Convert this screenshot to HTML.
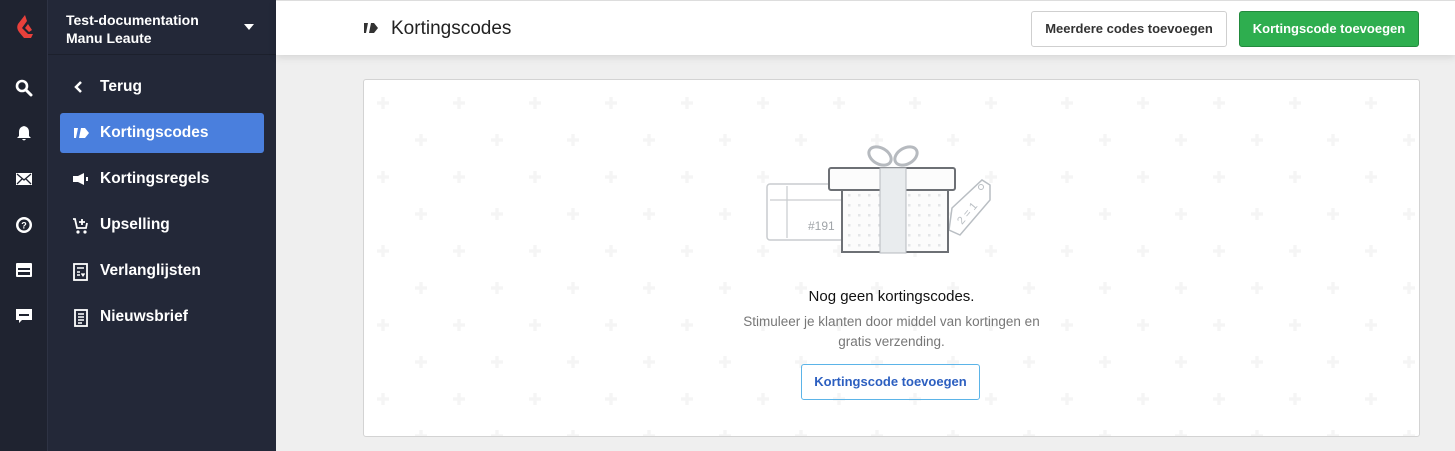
<!DOCTYPE html>
<html><head><meta charset="utf-8"><style>
*{margin:0;padding:0;box-sizing:border-box}
body{width:1455px;height:451px;overflow:hidden;background:#efefef;font-family:"Liberation Sans",sans-serif;position:relative}
.rail{position:absolute;left:0;top:0;width:48px;height:451px;background:#1f2330;border-right:1px solid #2e3344}
.side{position:absolute;left:48px;top:0;width:228px;height:451px;background:#232838}
.sh{height:55px;border-bottom:1px solid #1c202c;padding:11px 0 0 18px;color:#fff;font-weight:bold;font-size:14px;line-height:18px;position:relative}
.sh .c{position:absolute;right:22px;top:24px;border:5px solid transparent;border-top:6px solid #fff;border-bottom:0}
.item{position:absolute;left:12px;width:204px;height:40px;color:#fff;font-weight:bold;font-size:15.5px;line-height:40px;padding-left:40px;border-radius:3px}
.item svg{position:absolute;left:12px;top:12px}
.act{background:#4a7fdd}
.top{position:absolute;left:276px;top:0;right:0;height:55px;background:#fff;box-shadow:0 2px 8px rgba(0,0,0,.12);border-top:1px solid #ddd}
.title{position:absolute;left:115px;top:17px;font-size:19px;color:#222}
.btn{position:absolute;top:10px;height:36px;border-radius:3px;font-weight:bold;font-size:13px;line-height:34px;text-align:center}
.card{position:absolute;left:363px;top:79px;width:1057px;height:358px;background:#fff;border:1px solid #d3d3d3;border-radius:3px;overflow:hidden}
.ic{position:absolute;left:15px}
</style></head><body>
<div class="rail">
 <svg class="ic" style="top:14px" width="20" height="26" viewBox="0 0 20 26"><path d="M10 1 L3 10 Q1 14 4 18 L9 24 L16 24 L18 20 L13 20 L7 14 L12 7 Z" fill="#e8403b"/><path d="M13 10 L10 14 L14 18 L17 16 Z" fill="#e8403b"/></svg>
 <svg class="ic" style="top:79px" width="18" height="18" viewBox="0 0 18 18"><circle cx="7" cy="7" r="5" fill="none" stroke="#fff" stroke-width="2.6"/><path d="M11 11 L16 16" stroke="#fff" stroke-width="3" stroke-linecap="round"/></svg>
 <svg class="ic" style="top:124px" width="18" height="18" viewBox="0 0 18 18"><path d="M9 2 Q4 3 4 8 L4 12 L2 14 L16 14 L14 12 L14 8 Q14 3 9 2Z M7 15 Q9 18 11 15Z" fill="#fff"/></svg>
 <svg class="ic" style="top:172px" width="18" height="14" viewBox="0 0 18 14"><rect x="1" y="1" width="16" height="12" fill="#fff"/><path d="M2 2 L9 8 L16 2 M2 12 L7 7 M16 12 L11 7" stroke="#1f2330" stroke-width="1.3" fill="none"/></svg>
 <svg class="ic" style="top:216px" width="18" height="18" viewBox="0 0 18 18"><circle cx="9" cy="9" r="8" fill="#fff"/><circle cx="9" cy="9" r="5.5" fill="#1f2330"/><text x="9" y="12.5" font-size="9" font-weight="bold" text-anchor="middle" fill="#fff" font-family="Liberation Sans">?</text></svg>
 <svg class="ic" style="top:262px" width="18" height="16" viewBox="0 0 18 16"><rect x="1" y="1" width="16" height="14" rx="1" fill="#fff"/><rect x="3" y="6" width="12" height="2" fill="#1f2330"/><rect x="3" y="10" width="12" height="3" fill="#1f2330"/></svg>
 <svg class="ic" style="top:308px" width="18" height="16" viewBox="0 0 18 16"><path d="M1 1 H17 V12 H7 L4 15 V12 H1Z" fill="#fff"/><rect x="4" y="6" width="10" height="2" fill="#1f2330"/></svg>
</div>
<div class="side">
 <div class="sh">Test-documentation<br>Manu Leaute<span class="c"></span></div>
 <div class="item" style="top:67px"><svg width="14" height="16" viewBox="0 0 14 16"><path d="M9 3 L4 8 L9 13" stroke="#fff" stroke-width="2.5" fill="none"/></svg>Terug</div>
 <div class="item act" style="top:113px"><svg width="18" height="16" viewBox="0 0 18 16"><path d="M2 3 H6 L4 13 H2Z M9 3 L13 3 L17 8 L13 13 H7Z" fill="#fff"/></svg>Kortingscodes</div>
 <div class="item" style="top:159px"><svg width="18" height="16" viewBox="0 0 18 16"><path d="M1 5 H6 L12 2 V14 L6 11 H1Z M14 6 H16 V10 H14Z" fill="#fff"/></svg>Kortingsregels</div>
 <div class="item" style="top:205px"><svg width="18" height="18" viewBox="0 0 18 18"><path d="M1 2 H3 L5 11 H14 L15 6" stroke="#fff" stroke-width="1.8" fill="none"/><path d="M10 2 V8 M7 5 H13" stroke="#fff" stroke-width="1.8"/><circle cx="6" cy="15" r="1.6" fill="#fff"/><circle cx="13" cy="15" r="1.6" fill="#fff"/></svg>Upselling</div>
 <div class="item" style="top:251px"><svg width="18" height="18" viewBox="0 0 18 18"><rect x="2" y="1" width="13" height="16" fill="none" stroke="#fff" stroke-width="1.8"/><path d="M5 5 H12 M5 9 H8 M5 12 H8" stroke="#fff" stroke-width="1.5"/><path d="M11 14 L9 11 Q10 9 11 11 Q12 9 13 11Z" fill="#fff"/></svg>Verlanglijsten</div>
 <div class="item" style="top:297px"><svg width="18" height="18" viewBox="0 0 18 18"><rect x="3" y="1" width="12" height="16" fill="none" stroke="#fff" stroke-width="1.8"/><path d="M6 5 H12 M6 8 H12 M6 11 H12 M6 14 H10" stroke="#fff" stroke-width="1.4"/></svg>Nieuwsbrief</div>
</div>
<div class="top">
 <svg style="position:absolute;left:87px;top:20px" width="16" height="14" viewBox="0 0 16 14"><path d="M1 2 H5 L3 12 H1Z M8 2 L11 2 L15 7 L11 12 H6Z" fill="#333"/></svg>
 <div class="title">Kortingscodes</div>
 <div class="btn" style="left:755px;width:196px;background:#fff;border:1px solid #cfcfcf;color:#333">Meerdere codes toevoegen</div>
 <div class="btn" style="left:963px;width:180px;background:#2eae4f;border:1px solid #228a3d;color:#fff">Kortingscode toevoegen</div>
</div>
<div class="card">
 <svg width="1057" height="358" style="position:absolute;left:0;top:0">
  <defs><pattern id="p" width="76" height="74" patternUnits="userSpaceOnUse" x="13" y="17">
   <path d="M6 0 V12 M0 6 H12" stroke="#f5f5f5" stroke-width="3.5"/>
   <path d="M44 37 V49 M38 43 H50" stroke="#f5f5f5" stroke-width="3.5"/>
  </pattern>
  <pattern id="d" width="10" height="10" patternUnits="userSpaceOnUse"><rect x="4" y="4" width="2.5" height="2.5" fill="#e4e6e8"/></pattern></defs>
  <rect width="1057" height="358" fill="url(#p)"/>
  <g>
   <rect x="403" y="104" width="80" height="56" rx="3" fill="#fff" stroke="#c9cccf" stroke-width="1.5"/>
   <path d="M406 120 H480 M423 106 V158" stroke="#c9cccf" stroke-width="1.2"/>
   <text x="444" y="150" font-size="12" fill="#a0a4a8" font-family="Liberation Sans">#191</text>
   <path d="M588 128 L618 100 L626 105 L626 120 L596 155 L585 150Z" fill="#fff" stroke="#b9bec3" stroke-width="1.5"/>
   <circle cx="617" cy="107" r="2.5" fill="none" stroke="#b9bec3"/>
   <text x="598" y="145" font-size="11" fill="#b9bec3" transform="rotate(-50 598 145)" font-family="Liberation Sans">2 = 1</text>
   <rect x="478" y="108" width="106" height="64" fill="#fcfcfc" stroke="#6d7075" stroke-width="2"/>
   <rect x="478" y="108" width="106" height="64" fill="url(#d)"/>
   <rect x="465" y="88" width="126" height="22" rx="2" fill="#fcfcfc" stroke="#6d7075" stroke-width="2"/>
   <ellipse cx="516" cy="76" rx="12" ry="8" transform="rotate(30 516 76)" fill="none" stroke="#b6babf" stroke-width="3"/>
   <ellipse cx="542" cy="76" rx="12" ry="8" transform="rotate(-30 542 76)" fill="none" stroke="#b6babf" stroke-width="3"/>
   <rect x="516" y="88" width="26" height="85" fill="#e9ecee" stroke="#b6babf"/>
  </g>
 </svg>
 <div style="position:absolute;left:0;width:100%;top:208px;text-align:center;font-size:15px;color:#111">Nog geen kortingscodes.</div>
 <div style="position:absolute;left:0;width:100%;top:232px;text-align:center;font-size:13.5px;color:#777;line-height:20px">Stimuleer je klanten door middel van kortingen en<br>gratis verzending.</div>
 <div style="position:absolute;left:437px;top:284px;width:179px;height:36px;border:1px solid #5bb4e8;border-radius:3px;text-align:center;line-height:34px;font-weight:bold;font-size:13px;color:#2c5fc0">Kortingscode toevoegen</div>
</div>
</body></html>
